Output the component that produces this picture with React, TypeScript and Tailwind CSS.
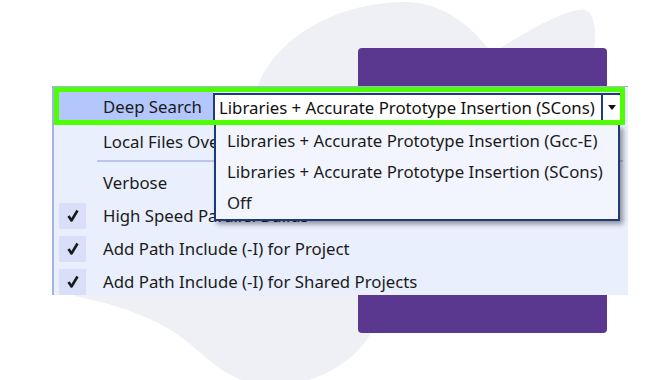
import React from "react";

const font = { fontFamily: '"Noto Sans", "Open Sans", sans-serif' };

function Check() {
  return (
    <svg width="12" height="13" viewBox="0 0 12 13">
      <path d="M1.5 7 L4.5 11.5 L10.5 1.5" fill="none" stroke="#1a1a1a" strokeWidth="2.6" strokeLinejoin="round" />
    </svg>
  );
}

function Row({ label, checked }: { label: string; checked?: boolean }) {
  return (
    <div className="flex h-[33px] shrink-0 items-center">
      <div className="ml-[5px] flex h-[26px] w-[27px] items-center justify-center">
        {checked && (
          <div className="flex h-[26px] w-[27px] items-center justify-center bg-[#d9dff8]">
            <Check />
          </div>
        )}
      </div>
      <div className="ml-[17px] whitespace-nowrap pt-[1px] text-[16.8px] text-[#1b1b1b]">{label}</div>
    </div>
  );
}

export default function App() {
  return (
    <div className="relative h-[380px] w-[669px] overflow-hidden bg-white pl-[52px] pt-[86px]" style={font}>
      <svg className="absolute left-0 top-0" width="669" height="380" viewBox="0 0 669 380">
        <path
          d="M258 86 C270 50 320 5 400 2 C440 0 470 25 488 48 L500 48 C530 30 560 12 580 10 C595 8 597 30 594 50 L594 330 L371 333 C350 370 300 390 260 385 C225 380 205 355 185 340 C160 320 120 305 75 296 L70 90 Z"
          fill="#efeff6"
        />
      </svg>
      <div className="absolute left-[358px] top-[48px] h-[285px] w-[249px] rounded-[4px] bg-[#5b3890]" />

      <div className="relative flex h-[209px] w-[576px] flex-col overflow-hidden border-l-2 border-t border-[#a3b3e3] bg-[#e9effc]">
        <div className="relative z-20 flex h-[38px] w-[571px] shrink-0 border-[5px] border-[#4dff00]">
          <div className="flex w-[154px] items-center bg-[#b3c7fc] pl-[44px] pt-[2px] text-[16.8px] text-[#1b1b1b]">Deep Search</div>
          <div className="mt-[1px] flex flex-1 border-l-2 border-t-2 border-[#1f3a7a] bg-white">
            <div className="flex w-[386px] items-center whitespace-nowrap pl-[4px] pt-[1px] text-[16.8px] text-[#111]">
              Libraries + Accurate Prototype Insertion (SCons)
            </div>
            <div className="w-[2px] bg-[#1f3a7a]" />
            <div className="flex flex-1 items-center justify-center pb-[1px]">
              <svg width="8" height="5" viewBox="0 0 8 5">
                <path d="M0 0 L8 0 L4 5 Z" fill="#111" />
              </svg>
            </div>
          </div>
        </div>

        <div className="absolute left-[160px] top-[38px] z-10 flex w-[406px] flex-col border-x-2 border-b-2 border-[#1f3a7a] bg-[#f2f5fe] pb-[1px] shadow-[3px_3px_5px_rgba(0,0,0,0.4)]">
          {[
            "Libraries + Accurate Prototype Insertion (Gcc-E)",
            "Libraries + Accurate Prototype Insertion (SCons)",
            "Off",
          ].map((t) => (
            <div key={t} className="flex h-[31px] items-center whitespace-nowrap pl-[11px] pt-[1px] text-[16.8px] text-[#1b1b1b]">
              {t}
            </div>
          ))}
        </div>

        <Row label="Local Files Override" />
        <div className="ml-[43px] mt-[2px] h-[2px] w-[526px] shrink-0 bg-[#bcc6e8]" />
        <div className="mt-[4px]" />
        <Row label="Verbose" />
        <Row label="High Speed Parallel Builds" checked />
        <Row label="Add Path Include (-I) for Project" checked />
        <Row label="Add Path Include (-I) for Shared Projects" checked />
      </div>
    </div>
  );
}
